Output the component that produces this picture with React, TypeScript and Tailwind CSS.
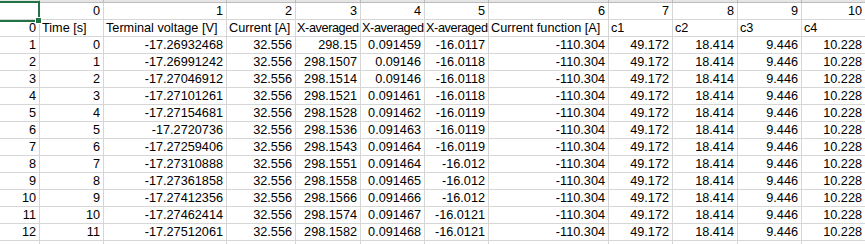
import React from "react";

const widths = [40, 64, 123, 69, 65, 64, 64, 120, 64, 65, 64, 64];
const gridCols =
  "grid grid-cols-[40px_64px_123px_69px_65px_64px_64px_120px_64px_65px_64px_64px]";

type Cell = { t: string; left?: boolean; tight?: boolean };

const header: Cell[] = [
  { t: "" },
  ...Array.from({ length: 11 }, (_, i) => ({ t: String(i) })),
];

const row0: Cell[] = [
  { t: "0" },
  { t: "Time [s]", left: true },
  { t: "Terminal voltage [V]", left: true },
  { t: "Current [A]", left: true },
  { t: "X-averaged", left: true, tight: true },
  { t: "X-averaged", left: true, tight: true },
  { t: "X-averaged", left: true, tight: true },
  { t: "Current function [A]", left: true },
  { t: "c1", left: true },
  { t: "c2", left: true },
  { t: "c3", left: true },
  { t: "c4", left: true },
];

const volt = [
  "-17.26932468",
  "-17.26991242",
  "-17.27046912",
  "-17.27101261",
  "-17.27154681",
  "-17.2720736",
  "-17.27259406",
  "-17.27310888",
  "-17.27361858",
  "-17.27412356",
  "-17.27462414",
  "-17.27512061",
];
const temp = [
  "298.15",
  "298.1507",
  "298.1514",
  "298.1521",
  "298.1528",
  "298.1536",
  "298.1543",
  "298.1551",
  "298.1558",
  "298.1566",
  "298.1574",
  "298.1582",
];
const xa2 = [
  "0.091459",
  "0.09146",
  "0.09146",
  "0.091461",
  "0.091462",
  "0.091463",
  "0.091464",
  "0.091464",
  "0.091465",
  "0.091466",
  "0.091467",
  "0.091468",
];
const xa3 = [
  "-16.0117",
  "-16.0118",
  "-16.0118",
  "-16.0118",
  "-16.0119",
  "-16.0119",
  "-16.0119",
  "-16.012",
  "-16.012",
  "-16.012",
  "-16.0121",
  "-16.0121",
];

const dataRows: Cell[][] = volt.map((v, i) => [
  { t: String(i + 1) },
  { t: String(i) },
  { t: v },
  { t: "32.556" },
  { t: temp[i] },
  { t: xa2[i] },
  { t: xa3[i] },
  { t: "-110.304" },
  { t: "49.172" },
  { t: "18.414" },
  { t: "9.446" },
  { t: "10.228" },
]);

const emptyRow: Cell[] = widths.map(() => ({ t: "" }));

function Row({ cells }: { cells: Cell[] }) {
  return (
    <div className={gridCols}>
      {cells.map((c, i) => (
        <div
          key={i}
          className={`h-[17px] border-r border-b border-[#d6d6d6] overflow-hidden whitespace-nowrap leading-[16px] ${
            c.left
              ? c.tight
                ? "text-left pl-[1px] tracking-[-0.4px]"
                : "text-left pl-[2px]"
              : "text-right pr-[3px]"
          }`}
        >
          {c.t}
        </div>
      ))}
    </div>
  );
}

export default function App() {
  return (
    <div
      className="relative w-[865px] h-[244px] overflow-hidden bg-white text-[12.7px] text-black"
      style={{ fontFamily: '"Liberation Sans", Arial, sans-serif' }}
    >
      <div className={gridCols}>
        {widths.map((_, i) => (
          <div
            key={i}
            className="h-[3px] bg-[#e6e6e6] border-r border-b border-[#bcbcbc]"
          />
        ))}
      </div>
      <Row cells={header} />
      <Row cells={row0} />
      {dataRows.map((r, i) => (
        <Row key={i} cells={r} />
      ))}
      <Row cells={emptyRow} />
      <div className="absolute left-[-3px] top-[1px] w-[43px] h-[21px] border-2 border-[#217346]" />
      <div className="absolute left-[35px] top-[17px] w-[7px] h-[7px] bg-[#217346] border border-white" />
    </div>
  );
}
